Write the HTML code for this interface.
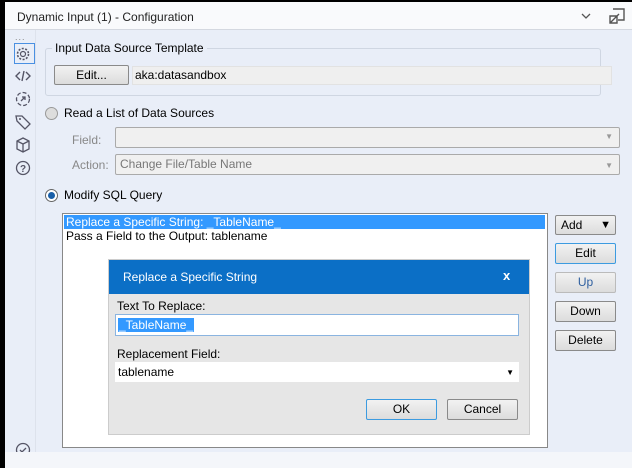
<!DOCTYPE html>
<html><head><style>
*{box-sizing:border-box;margin:0;padding:0}
body{width:632px;height:468px;overflow:hidden;background:#000;font-family:"Liberation Sans",sans-serif;font-size:12px;color:#000;position:relative}
.a{position:absolute}
#main{left:5px;top:2px;width:627px;height:466px;background:#e9eef8}
#title{left:5px;top:2px;width:627px;height:28px;background:#f9fafc;border-bottom:1px solid #d4d8e0}
#side{left:5px;top:30px;width:31px;height:422px;border-right:1px solid #dde2ec}
.btn{position:absolute;background:linear-gradient(#f2f2f2,#dcdcdc);border:1px solid #8a8a8a;border-radius:2px;text-align:center;font-size:12px}
.ic{position:absolute;left:10px}
</style></head><body>
<div id="main" class="a"></div>
<div id="title" class="a"><div class="a" style="left:12px;top:8px;font-size:12px;color:#222">Dynamic Input (1) - Configuration</div>
<svg class="a" style="left:575px;top:10px" width="12" height="8"><path d="M2 2l4 4 4-4" stroke="#555" fill="none" stroke-width="1.3"/></svg>
<svg class="a" style="left:604px;top:6px" width="16" height="16"><path d="M4 1h11v11H9M1 8v7h7V8z M1 15l9-9" stroke="#555" fill="none" stroke-width="1.4"/></svg>
</div>
<div id="side" class="a">
<div class="a" style="left:10px;top:2px;font-size:9px;color:#888;letter-spacing:1px">...</div>
<div class="a" style="left:9px;top:13px;width:21px;height:21px;border:1px solid #4a90e2"></div>
<svg class="ic" style="top:16px" width="16" height="16"><circle cx="8" cy="8" r="2.5" stroke="#556" fill="none" stroke-width="1.2"/><circle cx="8" cy="8" r="5.5" stroke="#556" fill="none" stroke-width="1.6" stroke-dasharray="2 1.5"/></svg>
<svg class="ic" style="top:38px" width="16" height="16"><path d="M5 4L1 8l4 4M11 4l4 4-4 4M9 3L7 13" stroke="#556" fill="none" stroke-width="1.4"/></svg>
<svg class="ic" style="top:61px" width="16" height="16"><circle cx="8" cy="8" r="6.5" stroke="#556" fill="none" stroke-width="1.3" stroke-dasharray="4 2"/><path d="M6 10l4-4M7 6h3v3" stroke="#556" fill="none" stroke-width="1.3"/></svg>
<svg class="ic" style="top:84px" width="16" height="16"><path d="M1 2h6l8 8-5 5-8-8z" stroke="#556" fill="none" stroke-width="1.3"/><circle cx="5" cy="5" r="1" fill="#556"/></svg>
<svg class="ic" style="top:107px" width="16" height="16"><path d="M8 1l6 3v8l-6 3-6-3V4zM2 4l6 3 6-3M8 7v8" stroke="#556" fill="none" stroke-width="1.3"/></svg>
<svg class="ic" style="top:130px" width="16" height="16"><circle cx="8" cy="8" r="6.5" stroke="#556" fill="none" stroke-width="1.3"/><text x="8" y="12" font-size="10" font-weight="bold" text-anchor="middle" fill="#556" font-family="Liberation Sans">?</text></svg>
<svg class="ic" style="top:412px" width="16" height="16"><circle cx="8" cy="8" r="6.5" stroke="#556" fill="none" stroke-width="1.3"/><path d="M5 8l2 2 4-4" stroke="#556" fill="none" stroke-width="1.3"/></svg>
</div>
<div class="a" style="left:5px;top:452px;width:627px;height:16px;background:#f4f6fa"></div>

<div class="a" style="left:45px;top:48px;width:556px;height:48px;border:1px solid #cfd6e2;border-radius:3px"></div>
<div class="a" style="left:52px;top:41px;background:#e9eef8;padding:0 3px">Input Data Source Template</div>
<div class="btn" style="left:54px;top:65px;width:75px;height:20px;line-height:18px">Edit...</div>
<div class="a" style="left:132px;top:66px;width:480px;height:19px;background:#efefef;border:1px solid #e2e2e2;line-height:17px;padding-left:2px">aka:datasandbox</div>

<div class="a" style="left:45px;top:107px;width:13px;height:13px;border-radius:50%;border:1px solid #999;background:#ddd"></div>
<div class="a" style="left:64px;top:106px">Read a List of Data Sources</div>
<div class="a" style="left:72px;top:133px;color:#888">Field:</div>
<div class="a" style="left:115px;top:127px;width:505px;height:21px;border:1px solid #aaa;background:#f0f0f0;border-radius:2px"><span class="a" style="right:6px;top:4px;color:#999;font-size:8px">▼</span></div>
<div class="a" style="left:72px;top:158px;color:#888">Action:</div>
<div class="a" style="left:115px;top:154px;width:505px;height:21px;border:1px solid #aaa;background:#f0f0f0;border-radius:2px;color:#777;line-height:19px;padding-left:4px">Change File/Table Name<span class="a" style="right:6px;top:1px;color:#999;font-size:8px">▼</span></div>

<div class="a" style="left:45px;top:189px;width:13px;height:13px;border-radius:50%;border:1px solid #666;background:#fff"><div class="a" style="left:2px;top:2px;width:7px;height:7px;border-radius:50%;background:#1a5fa8"></div></div>
<div class="a" style="left:64px;top:188px">Modify SQL Query</div>

<div class="a" style="left:62px;top:213px;width:486px;height:235px;background:#fff;border:1px solid #888"></div>
<div class="a" style="left:64px;top:215px;width:481px;height:14px;background:#3399ff;color:#fff;line-height:14px;padding-left:2px">Replace a Specific String: _TableName_</div>
<div class="a" style="left:66px;top:229px">Pass a Field to the Output: tablename</div>

<div class="btn" style="left:555px;top:215px;width:61px;height:20px;line-height:18px;text-align:left;padding-left:5px">Add<span class="a" style="right:4px;top:0px;font-size:11px">▼</span></div>
<div class="btn" style="left:555px;top:243px;width:61px;height:21px;line-height:19px;border-color:#3c9be0">Edit</div>
<div class="btn" style="left:555px;top:272px;width:61px;height:21px;line-height:19px;color:#3060a0;border-color:#bbb">Up</div>
<div class="btn" style="left:555px;top:301px;width:61px;height:21px;line-height:19px">Down</div>
<div class="btn" style="left:555px;top:330px;width:61px;height:21px;line-height:19px">Delete</div>

<div class="a" style="left:108px;top:259px;width:422px;height:176px;background:#e6e6e6;border:1px solid #ccc"></div>
<div class="a" style="left:109px;top:260px;width:420px;height:34px;background:#0b6fc6;color:#fff;line-height:34px;padding-left:14px">Replace a Specific String</div>
<div class="a" style="left:503px;top:268px;color:#fff;font-weight:bold;font-size:13px">x</div>
<div class="a" style="left:117px;top:299px">Text To Replace:</div>
<div class="a" style="left:115px;top:314px;width:404px;height:22px;background:#fff;border:1px solid #8ab4e0"><span class="a" style="left:2px;top:3px;background:#3399ff;color:#fff;padding:0 1px;line-height:14px">_TableName_</span></div>
<div class="a" style="left:117px;top:347px">Replacement Field:</div>
<div class="a" style="left:115px;top:362px;width:404px;height:20px;background:#fff;line-height:20px;padding-left:3px">tablename<span class="a" style="right:5px;top:1px;font-size:8px">▼</span></div>
<div class="btn" style="left:366px;top:399px;width:71px;height:21px;line-height:19px;border-color:#3c9be0">OK</div>
<div class="btn" style="left:447px;top:399px;width:71px;height:21px;line-height:19px">Cancel</div>
</body></html>
